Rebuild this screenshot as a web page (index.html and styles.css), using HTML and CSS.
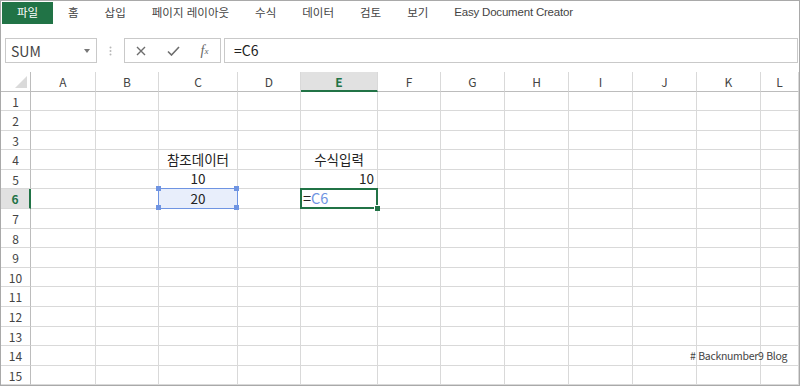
FILE: index.html
```html
<!DOCTYPE html>
<html lang="ko">
<head>
    <meta charset="UTF-8">
    <meta name="viewport" content="width=device-width, initial-scale=1.0">
    <title>Excel - 셀 참조</title>
    <link rel="stylesheet" href="styles.css">
</head>
<body>
    <div class="window">
        <div class="tabs">
            <div class="tab file">파일</div>
            <div class="tab first">홈</div>
            <div class="tab">삽입</div>
            <div class="tab">페이지 레이아웃</div>
            <div class="tab">수식</div>
            <div class="tab">데이터</div>
            <div class="tab">검토</div>
            <div class="tab">보기</div>
            <div class="tab latin">Easy Document Creator</div>
        </div>

        <div class="formula-bar">
            <div class="name-box">
                <span>SUM</span>
                <span class="caret"></span>
            </div>
            <div class="dots">
                <svg width="3" height="10" viewBox="0 0 3 10"><circle cx="1.5" cy="1.5" r="1" fill="#b8b8b8"/><circle cx="1.5" cy="5" r="1" fill="#b8b8b8"/><circle cx="1.5" cy="8.5" r="1" fill="#b8b8b8"/></svg>
            </div>
            <div class="fx-buttons">
                <span class="btn">
                    <svg width="10" height="10" viewBox="0 0 10 10"><path d="M1 1 L9 9 M9 1 L1 9" stroke="#6d6d6d" stroke-width="1.4" fill="none"/></svg>
                </span>
                <span class="btn">
                    <svg width="13" height="10" viewBox="0 0 13 10"><path d="M1 5.5 L4.5 9 L12 1" stroke="#6d6d6d" stroke-width="1.6" fill="none"/></svg>
                </span>
                <span class="btn fx"><i>f</i><sub>x</sub></span>
            </div>
            <div class="formula-input">=C6</div>
        </div>

        <div class="sheet" id="sheet">
            <!-- 셀은 스크립트로 채워짐 -->
        </div>

        <div class="watermark"># Backnumber9 Blog</div>
    </div>

    <script>
        const cols = ['A', 'B', 'C', 'D', 'E', 'F', 'G', 'H', 'I', 'J', 'K', 'L'];

        // 셀 내용과 정렬
        const cells = {
            C4: { text: '참조데이터', cls: 'center' },
            E4: { text: '수식입력', cls: 'center' },
            C5: { text: '10', cls: 'center' },
            E5: { text: '10', cls: 'right' },
            C6: { text: '20', cls: 'center ref-cell' },
            E6: { text: '=<span class="ref">C6</span>', cls: 'left active' }
        };

        function buildSheet() {
            const sheet = document.getElementById('sheet');
            let html = '<div class="corner"></div>';

            cols.forEach(c => {
                html += `<div class="col-head${c === 'E' ? ' sel' : ''}">${c}</div>`;
            });

            for (let r = 1; r <= 15; r++) {
                html += `<div class="row-head${r === 6 ? ' sel' : ''}">${r}</div>`;
                cols.forEach(c => {
                    const cell = cells[c + r];
                    if (cell) {
                        html += `<div class="cell ${cell.cls}">${cell.text}</div>`;
                    } else {
                        html += '<div class="cell"></div>';
                    }
                });
            }
            sheet.innerHTML = html;
        }

        buildSheet();
    </script>
</body>
</html>
```

FILE: styles.css
```css
body {
    margin: 0;
    padding: 0;
    font-family: "Noto Sans CJK KR", "Noto Sans", sans-serif;
    background-color: #fff;
}
.window {
    position: relative;
    width: 800px;
    height: 386px;
    box-sizing: border-box;
    border: 1px solid #a9a9a9;
    background-color: #fff;
    overflow: hidden;
}

/* 리본 탭 */
.tabs {
    display: flex;
    align-items: flex-start;
    height: 25px;
    padding: 1px 0 0 1px;
    box-sizing: border-box;
    font-size: 11.5px;
    color: #444;
}
.tab {
    height: 22px;
    line-height: 21px;
    padding: 0 13px;
    white-space: nowrap;
}
.tab.file {
    width: 51px;
    padding: 0;
    text-align: center;
    background-color: #217346;
    color: #fff;
}
.tab.first {
    margin-left: 2px;
}
.tab.latin {
    font-family: "Liberation Sans", Arial, sans-serif;
    font-size: 11.5px;
    letter-spacing: -0.2px;
}

/* 수식 입력줄 */
.formula-bar {
    display: flex;
    align-items: center;
    height: 25px;
    margin-top: 12px;
}
.name-box {
    display: flex;
    align-items: center;
    justify-content: space-between;
    width: 92px;
    height: 25px;
    margin-left: 4px;
    padding: 0 6px 0 5px;
    box-sizing: border-box;
    border: 1px solid #c9c9c9;
    font-size: 14px;
    color: #444;
}
.caret {
    width: 0;
    height: 0;
    border-left: 3.5px solid transparent;
    border-right: 3.5px solid transparent;
    border-top: 4px solid #777;
}
.dots {
    display: flex;
    justify-content: center;
    width: 27px;
}
.fx-buttons {
    display: grid;
    grid-template-columns: 32px 32px 31px;
    align-items: center;
    width: 97px;
    height: 25px;
    box-sizing: border-box;
    border: 1px solid #c9c9c9;
}
.btn {
    display: flex;
    justify-content: center;
    align-items: center;
}
.fx {
    font-family: "Liberation Serif", serif;
    font-size: 14px;
    color: #666;
}
.fx sub {
    font-size: 9px;
    font-style: italic;
    vertical-align: -2px;
}
.formula-input {
    flex: 1;
    height: 25px;
    line-height: 23px;
    margin-left: 3px;
    margin-right: 1px;
    padding-left: 9px;
    box-sizing: border-box;
    border: 1px solid #c9c9c9;
    font-size: 14px;
    color: #222;
}

/* 시트 */
.sheet {
    display: grid;
    grid-template-columns: 30px 65px 63px 79px 63px 77px 63px 64px 64px 64px 64px 64px 1fr;
    grid-template-rows: 20px 19px 20px 19px 20px 19px 20px 20px 19px 20px 19px 20px 20px 19px 20px 19px;
    margin-top: 9px;
    font-size: 13.5px;
    color: #222;
}
.corner,
.col-head,
.row-head,
.cell {
    box-sizing: border-box;
    border-right: 1px solid #d9d9d9;
    border-bottom: 1px solid #d9d9d9;
}
.corner {
    position: relative;
    border-right-color: #bcbcbc;
    border-bottom-color: #bcbcbc;
}
.corner::after {
    content: "";
    position: absolute;
    right: 3px;
    bottom: 3px;
    width: 0;
    height: 0;
    border-left: 12px solid transparent;
    border-bottom: 12px solid #dadada;
}
.col-head {
    display: flex;
    align-items: center;
    justify-content: center;
    border-bottom-color: #bcbcbc;
    font-size: 12px;
    color: #444;
}
.row-head {
    display: flex;
    align-items: center;
    justify-content: center;
    border-right-color: #bcbcbc;
    font-size: 12px;
    color: #444;
}
.col-head.sel {
    background-color: #e1e1e1;
    border-bottom: 2px solid #217346;
    color: #217346;
    font-weight: bold;
}
.row-head.sel {
    background-color: #e1e1e1;
    border-right: 2px solid #217346;
    color: #217346;
    font-weight: bold;
}
.cell {
    display: flex;
    align-items: center;
    white-space: nowrap;
    line-height: 1;
}
.cell.center {
    justify-content: center;
}
.cell.right {
    justify-content: flex-end;
    padding-right: 3px;
}
.cell.left {
    padding-left: 2px;
}

/* 참조된 셀 (파란 테두리) */
.ref-cell {
    position: relative;
    background-color: #e8eefb;
}
.ref-cell::before {
    content: "";
    position: absolute;
    left: -1px;
    top: -1px;
    right: -1px;
    bottom: -1px;
    border: 1.5px solid #6f94e2;
}
.ref-cell::after {
    content: "";
    position: absolute;
    left: -3px;
    top: -3px;
    width: 5px;
    height: 5px;
    background-color: #6f94e2;
    box-shadow: 78px 0 0 #6f94e2, 0 19px 0 #6f94e2, 78px 19px 0 #6f94e2;
}

/* 활성 셀 (녹색 테두리) */
.active {
    position: relative;
    font-size: 14.5px;
}
.active::before {
    content: "";
    position: absolute;
    left: -1px;
    top: -1px;
    right: -1px;
    bottom: -1px;
    border: 2px solid #217346;
}
.active::after {
    content: "";
    position: absolute;
    right: -3px;
    bottom: -3px;
    width: 5px;
    height: 5px;
    background-color: #217346;
    border-left: 1px solid #fff;
    border-top: 1px solid #fff;
}
.ref {
    color: #6f94e2;
}

.watermark {
    position: absolute;
    left: 689px;
    top: 347px;
    font-size: 10.5px;
    letter-spacing: -0.3px;
    color: #444;
}
```
